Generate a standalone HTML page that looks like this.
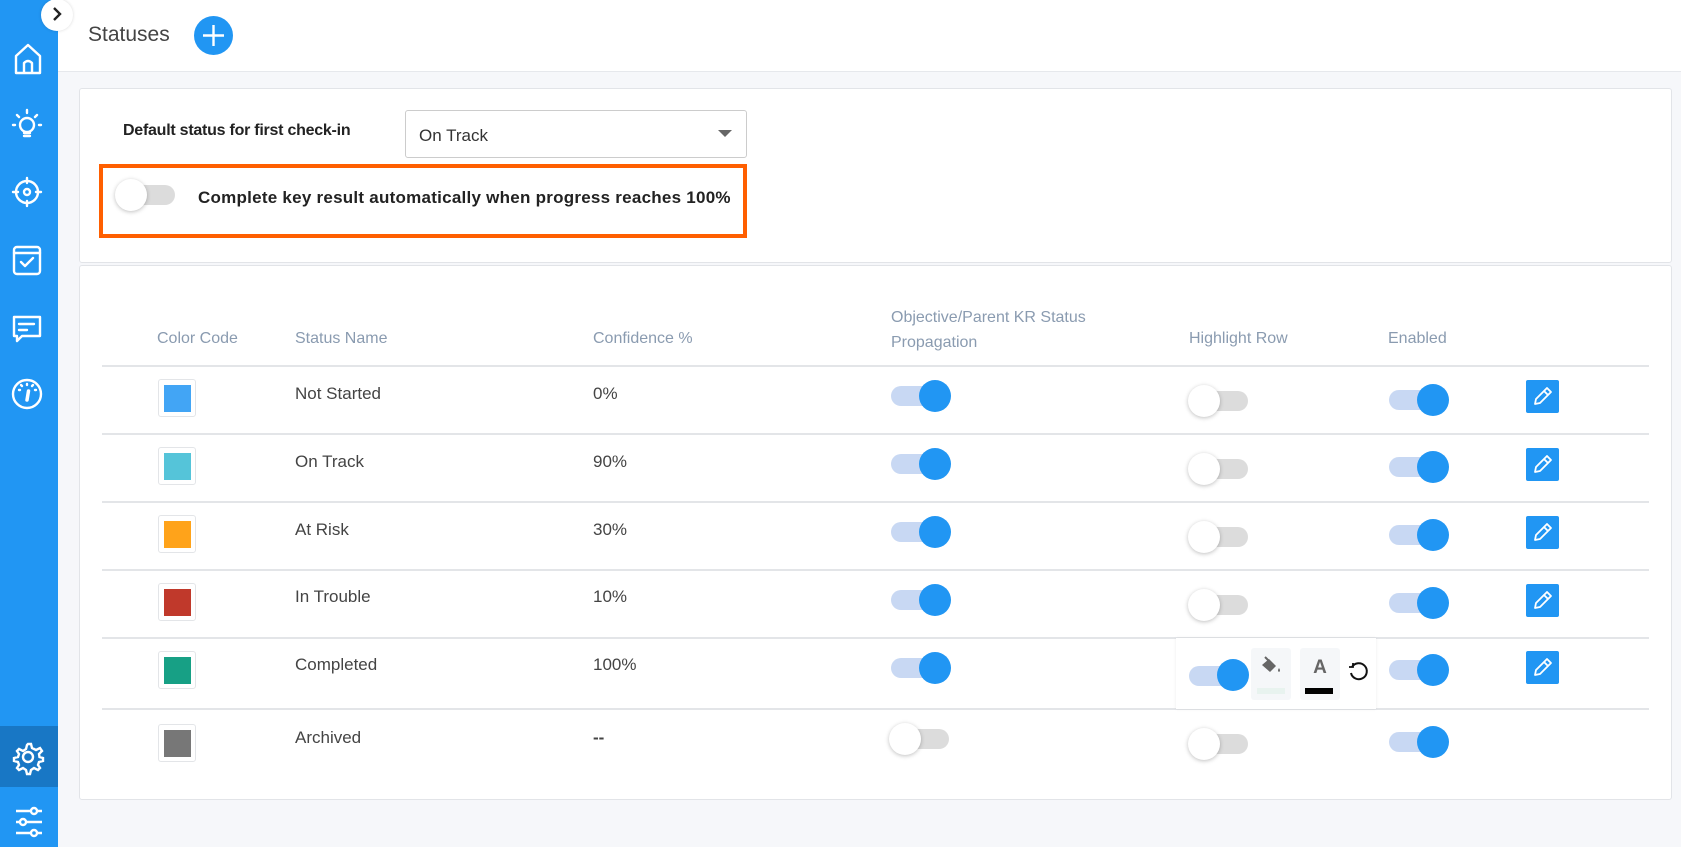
<!DOCTYPE html>
<html><head><meta charset="utf-8"><style>
*{box-sizing:border-box;margin:0;padding:0}
body{width:1681px;height:847px;overflow:hidden;background:#f6f7fa;font-family:"Liberation Sans",sans-serif;position:relative;color:#333}
.abs{position:absolute}
.side{left:0;top:0;width:58px;height:847px;background:#2196f3}
.hdr{left:58px;top:0;width:1623px;height:72px;background:#fff;border-bottom:1px solid #e6e8ec}
.card{background:#fff;border:1px solid #e2e4e8;border-radius:3px}
.th{color:#8a9bb0;font-size:16px}
.td{font-size:17px;color:#444}
.line{height:2px;background:#e3e5e8;left:102px;width:1547px}
.sw{width:38px;height:38px;border:1px solid #e3e5e8;border-radius:3px;background:#fff}
.sw i{position:absolute;left:5px;top:5px;width:27px;height:27px}
.tg{width:58px;height:20px;border-radius:10px}
.tg.on{background:#c8d8f3}.tg.off{background:#dcdcdc}
.kn{width:32px;height:32px;border-radius:50%;top:-6px}
.tg.on .kn{right:-2px;background:#2196f3}
.tg.off .kn{left:-2px;background:#fff;box-shadow:0 1px 4px rgba(0,0,0,.25)}
.ed{width:33px;height:33px;background:#2196f3;border-radius:2px}
</style></head><body>
<div class="abs side"></div>
<svg class="abs" style="left:0;top:0" width="58" height="847" fill="none" stroke="#fff" stroke-width="2.4" stroke-linecap="round" stroke-linejoin="round">
<path d="M16 56 L28 45 L40 56 V73 H16 Z M24 73 V63 Q28 59 32 63 V73"/>
<circle cx="27" cy="125" r="7"/><path d="M24 133 h6 M24 136 h6 M27 110 v3 M17 115 l2 2 M37 115 l-2 2 M13 125 h2 M39 125 h2"/>
<circle cx="27" cy="192" r="11"/><circle cx="27" cy="192" r="3"/><path d="M27 178 v5 M27 201 v5 M13 192 h5 M36 192 h5"/>
<rect x="14" y="247" width="26" height="27" rx="3"/><path d="M14 253 h26 M21 262 l4 4 l8 -8"/>
<path d="M14 317 h26 v19 h-18 l-5 5 v-5 h-3 Z M19 324 h15 M19 330 h8"/>
<circle cx="27" cy="394" r="14"/><path d="M27 400 l1.5 -9" stroke-width="3.5"/><path d="M27 384 v1 M19 390 h1 M35 390 h1 M21 385 l1 1 M33 385 l-1 1"/>
</svg>
<div class="abs" style="left:0;top:726px;width:58px;height:61px;background:#1877c5"></div>
<svg class="abs" style="left:10px;top:740px" width="36" height="36" fill="none" stroke="#fff" stroke-width="2.4"><circle cx="18" cy="17" r="5"/><path d="M18 4 l3 0 1 4 4 2 4-2 2 3-3 3 .5 3 3.5 1 v3 l-4 1-1 3 2 3-2 2-4-2-3 2-1 4h-3l-1-4-3-2-4 2-2-2 2-3-1-3-4-1v-3l4-1 1-3-2-3 2-2 4 2 3-2 1-4z"/></svg>
<svg class="abs" style="left:14px;top:805px" width="30" height="36" fill="none" stroke="#fff" stroke-width="2.4"><path d="M2 6 h26 M2 17 h26 M2 28 h26"/><circle cx="20" cy="6" r="3" fill="#2196f3"/><circle cx="9" cy="17" r="3" fill="#2196f3"/><circle cx="20" cy="28" r="3" fill="#2196f3"/></svg>
<div class="abs hdr"></div>
<div class="abs" style="left:41px;top:-1px;width:32px;height:32px;border-radius:50%;background:#fff;box-shadow:0 0 3px rgba(0,0,0,.15)"></div>
<svg class="abs" style="left:50px;top:6px" width="14" height="16" fill="none" stroke="#222" stroke-width="2.4"><path d="M4 2 l6 6 -6 6"/></svg>
<div class="abs" style="left:88px;top:23px;font-size:21px;color:#444">Statuses</div>
<div class="abs" style="left:194px;top:16px;width:39px;height:39px;border-radius:50%;background:#2196f3"></div>
<svg class="abs" style="left:194px;top:16px" width="39" height="39" stroke="#fff" stroke-width="2.4"><path d="M19.5 9 v21 M9 19.5 h21"/></svg>

<div class="abs card" style="left:79px;top:88px;width:1593px;height:175px"></div>
<div class="abs" style="left:123px;top:122px;font-size:16px;font-weight:bold;color:#222;letter-spacing:-0.25px">Default status for first check-in</div>
<div class="abs" style="left:405px;top:110px;width:342px;height:48px;border:1px solid #ccc;border-radius:3px;background:#fff"></div>
<div class="abs" style="left:419px;top:126px;font-size:17px;color:#333">On Track</div>
<div class="abs" style="left:718px;top:130px;width:0;height:0;border-left:7px solid transparent;border-right:7px solid transparent;border-top:7px solid #666"></div>
<div class="abs" style="left:99px;top:164px;width:648px;height:74px;border:4px solid #ff5f00"></div>
<div class="abs tg off" style="left:117px;top:185px"><div class="abs kn"></div></div>
<div class="abs" style="left:198px;top:188px;font-size:17px;font-weight:bold;color:#222;letter-spacing:0.25px">Complete key result automatically when progress reaches 100%</div>

<div class="abs card" style="left:79px;top:265px;width:1593px;height:535px"></div>
<div class="abs th" style="left:157px;top:330px">Color Code</div>
<div class="abs th" style="left:295px;top:330px">Status Name</div>
<div class="abs th" style="left:593px;top:330px">Confidence %</div>
<div class="abs th" style="left:891px;top:305px;line-height:25px">Objective/Parent KR Status<br>Propagation</div>
<div class="abs th" style="left:1189px;top:330px">Highlight Row</div>
<div class="abs th" style="left:1388px;top:330px">Enabled</div>
<div class="abs line" style="top:365px"></div>
<div class="abs line" style="top:433px"></div>
<div class="abs line" style="top:501px"></div>
<div class="abs line" style="top:569px"></div>
<div class="abs line" style="top:637px"></div>
<div class="abs line" style="top:708px"></div>

<div class="abs sw" style="left:158px;top:379px"><i style="background:#42a5f5"></i></div>
<div class="abs td" style="left:295px;top:384px">Not Started</div><div class="abs td" style="left:593px;top:384px">0%</div>
<div class="abs tg on" style="left:891px;top:386px"><div class="abs kn"></div></div>
<div class="abs tg off" style="left:1190px;top:391px"><div class="abs kn"></div></div>
<div class="abs tg on" style="left:1389px;top:390px"><div class="abs kn"></div></div>
<div class="abs ed" style="left:1526px;top:380px"></div>

<div class="abs sw" style="left:158px;top:447px"><i style="background:#55c4d9"></i></div>
<div class="abs td" style="left:295px;top:452px">On Track</div><div class="abs td" style="left:593px;top:452px">90%</div>
<div class="abs tg on" style="left:891px;top:454px"><div class="abs kn"></div></div>
<div class="abs tg off" style="left:1190px;top:459px"><div class="abs kn"></div></div>
<div class="abs tg on" style="left:1389px;top:457px"><div class="abs kn"></div></div>
<div class="abs ed" style="left:1526px;top:448px"></div>

<div class="abs sw" style="left:158px;top:515px"><i style="background:#ffa31a"></i></div>
<div class="abs td" style="left:295px;top:520px">At Risk</div><div class="abs td" style="left:593px;top:520px">30%</div>
<div class="abs tg on" style="left:891px;top:522px"><div class="abs kn"></div></div>
<div class="abs tg off" style="left:1190px;top:527px"><div class="abs kn"></div></div>
<div class="abs tg on" style="left:1389px;top:525px"><div class="abs kn"></div></div>
<div class="abs ed" style="left:1526px;top:516px"></div>

<div class="abs sw" style="left:158px;top:583px"><i style="background:#c0392b"></i></div>
<div class="abs td" style="left:295px;top:587px">In Trouble</div><div class="abs td" style="left:593px;top:587px">10%</div>
<div class="abs tg on" style="left:891px;top:590px"><div class="abs kn"></div></div>
<div class="abs tg off" style="left:1190px;top:595px"><div class="abs kn"></div></div>
<div class="abs tg on" style="left:1389px;top:593px"><div class="abs kn"></div></div>
<div class="abs ed" style="left:1526px;top:584px"></div>

<div class="abs" style="left:1176px;top:638px;width:200px;height:71px;background:#fff;box-shadow:0 0 3px rgba(0,0,0,.08)"></div>
<div class="abs sw" style="left:158px;top:651px"><i style="background:#17a085"></i></div>
<div class="abs td" style="left:295px;top:655px">Completed</div><div class="abs td" style="left:593px;top:655px">100%</div>
<div class="abs tg on" style="left:891px;top:658px"><div class="abs kn"></div></div>
<div class="abs tg on" style="left:1189px;top:666px"><div class="abs kn" style="top:-7px"></div></div>
<div class="abs" style="left:1251px;top:648px;width:40px;height:52px;background:#f5f7f9;border-radius:3px"></div>
<div class="abs" style="left:1257px;top:688px;width:28px;height:6px;background:#e8f3ef"></div>
<svg class="abs" style="left:1259px;top:655px" width="24" height="22" fill="#666"><path d="M3 10 L10 4 L17 11 L11 17 Z"/><path d="M6 2 l5 5" stroke="#666" stroke-width="2"/><path d="M20 13 q-2 3 0 4 q2 -1 0 -4z"/></svg>
<div class="abs" style="left:1300px;top:648px;width:40px;height:52px;background:#f5f7f9;border-radius:3px"></div>
<div class="abs" style="left:1305px;top:657px;width:30px;text-align:center;font-size:19px;color:#666;font-weight:bold">A</div>
<div class="abs" style="left:1305px;top:688px;width:28px;height:6px;background:#000"></div>
<svg class="abs" style="left:1347px;top:660px" width="22" height="22" fill="none" stroke="#111" stroke-width="2"><path d="M5 7 A8 8 0 1 1 4 13"/><path d="M2 7 h4 v-4" stroke-width="1.8"/></svg>
<div class="abs tg on" style="left:1389px;top:660px"><div class="abs kn"></div></div>
<div class="abs ed" style="left:1526px;top:651px"></div>

<div class="abs sw" style="left:158px;top:724px"><i style="background:#777"></i></div>
<div class="abs td" style="left:295px;top:728px">Archived</div><div class="abs td" style="left:593px;top:728px;font-weight:bold">--</div>
<div class="abs tg off" style="left:891px;top:729px"><div class="abs kn"></div></div>
<div class="abs tg off" style="left:1190px;top:734px"><div class="abs kn"></div></div>
<div class="abs tg on" style="left:1389px;top:732px"><div class="abs kn"></div></div>

<svg width="0" height="0"><defs><g id="pen"><path d="M9 24 L10 19 L21 8 L25 12 L14 23 Z M18 11 l4 4" fill="none" stroke="#fff" stroke-width="1.8" stroke-linejoin="round"/></g></defs></svg>
<svg class="abs" style="left:1526px;top:380px" width="33" height="33"><use href="#pen"/></svg>
<svg class="abs" style="left:1526px;top:448px" width="33" height="33"><use href="#pen"/></svg>
<svg class="abs" style="left:1526px;top:516px" width="33" height="33"><use href="#pen"/></svg>
<svg class="abs" style="left:1526px;top:584px" width="33" height="33"><use href="#pen"/></svg>
<svg class="abs" style="left:1526px;top:651px" width="33" height="33"><use href="#pen"/></svg>
</body></html>
